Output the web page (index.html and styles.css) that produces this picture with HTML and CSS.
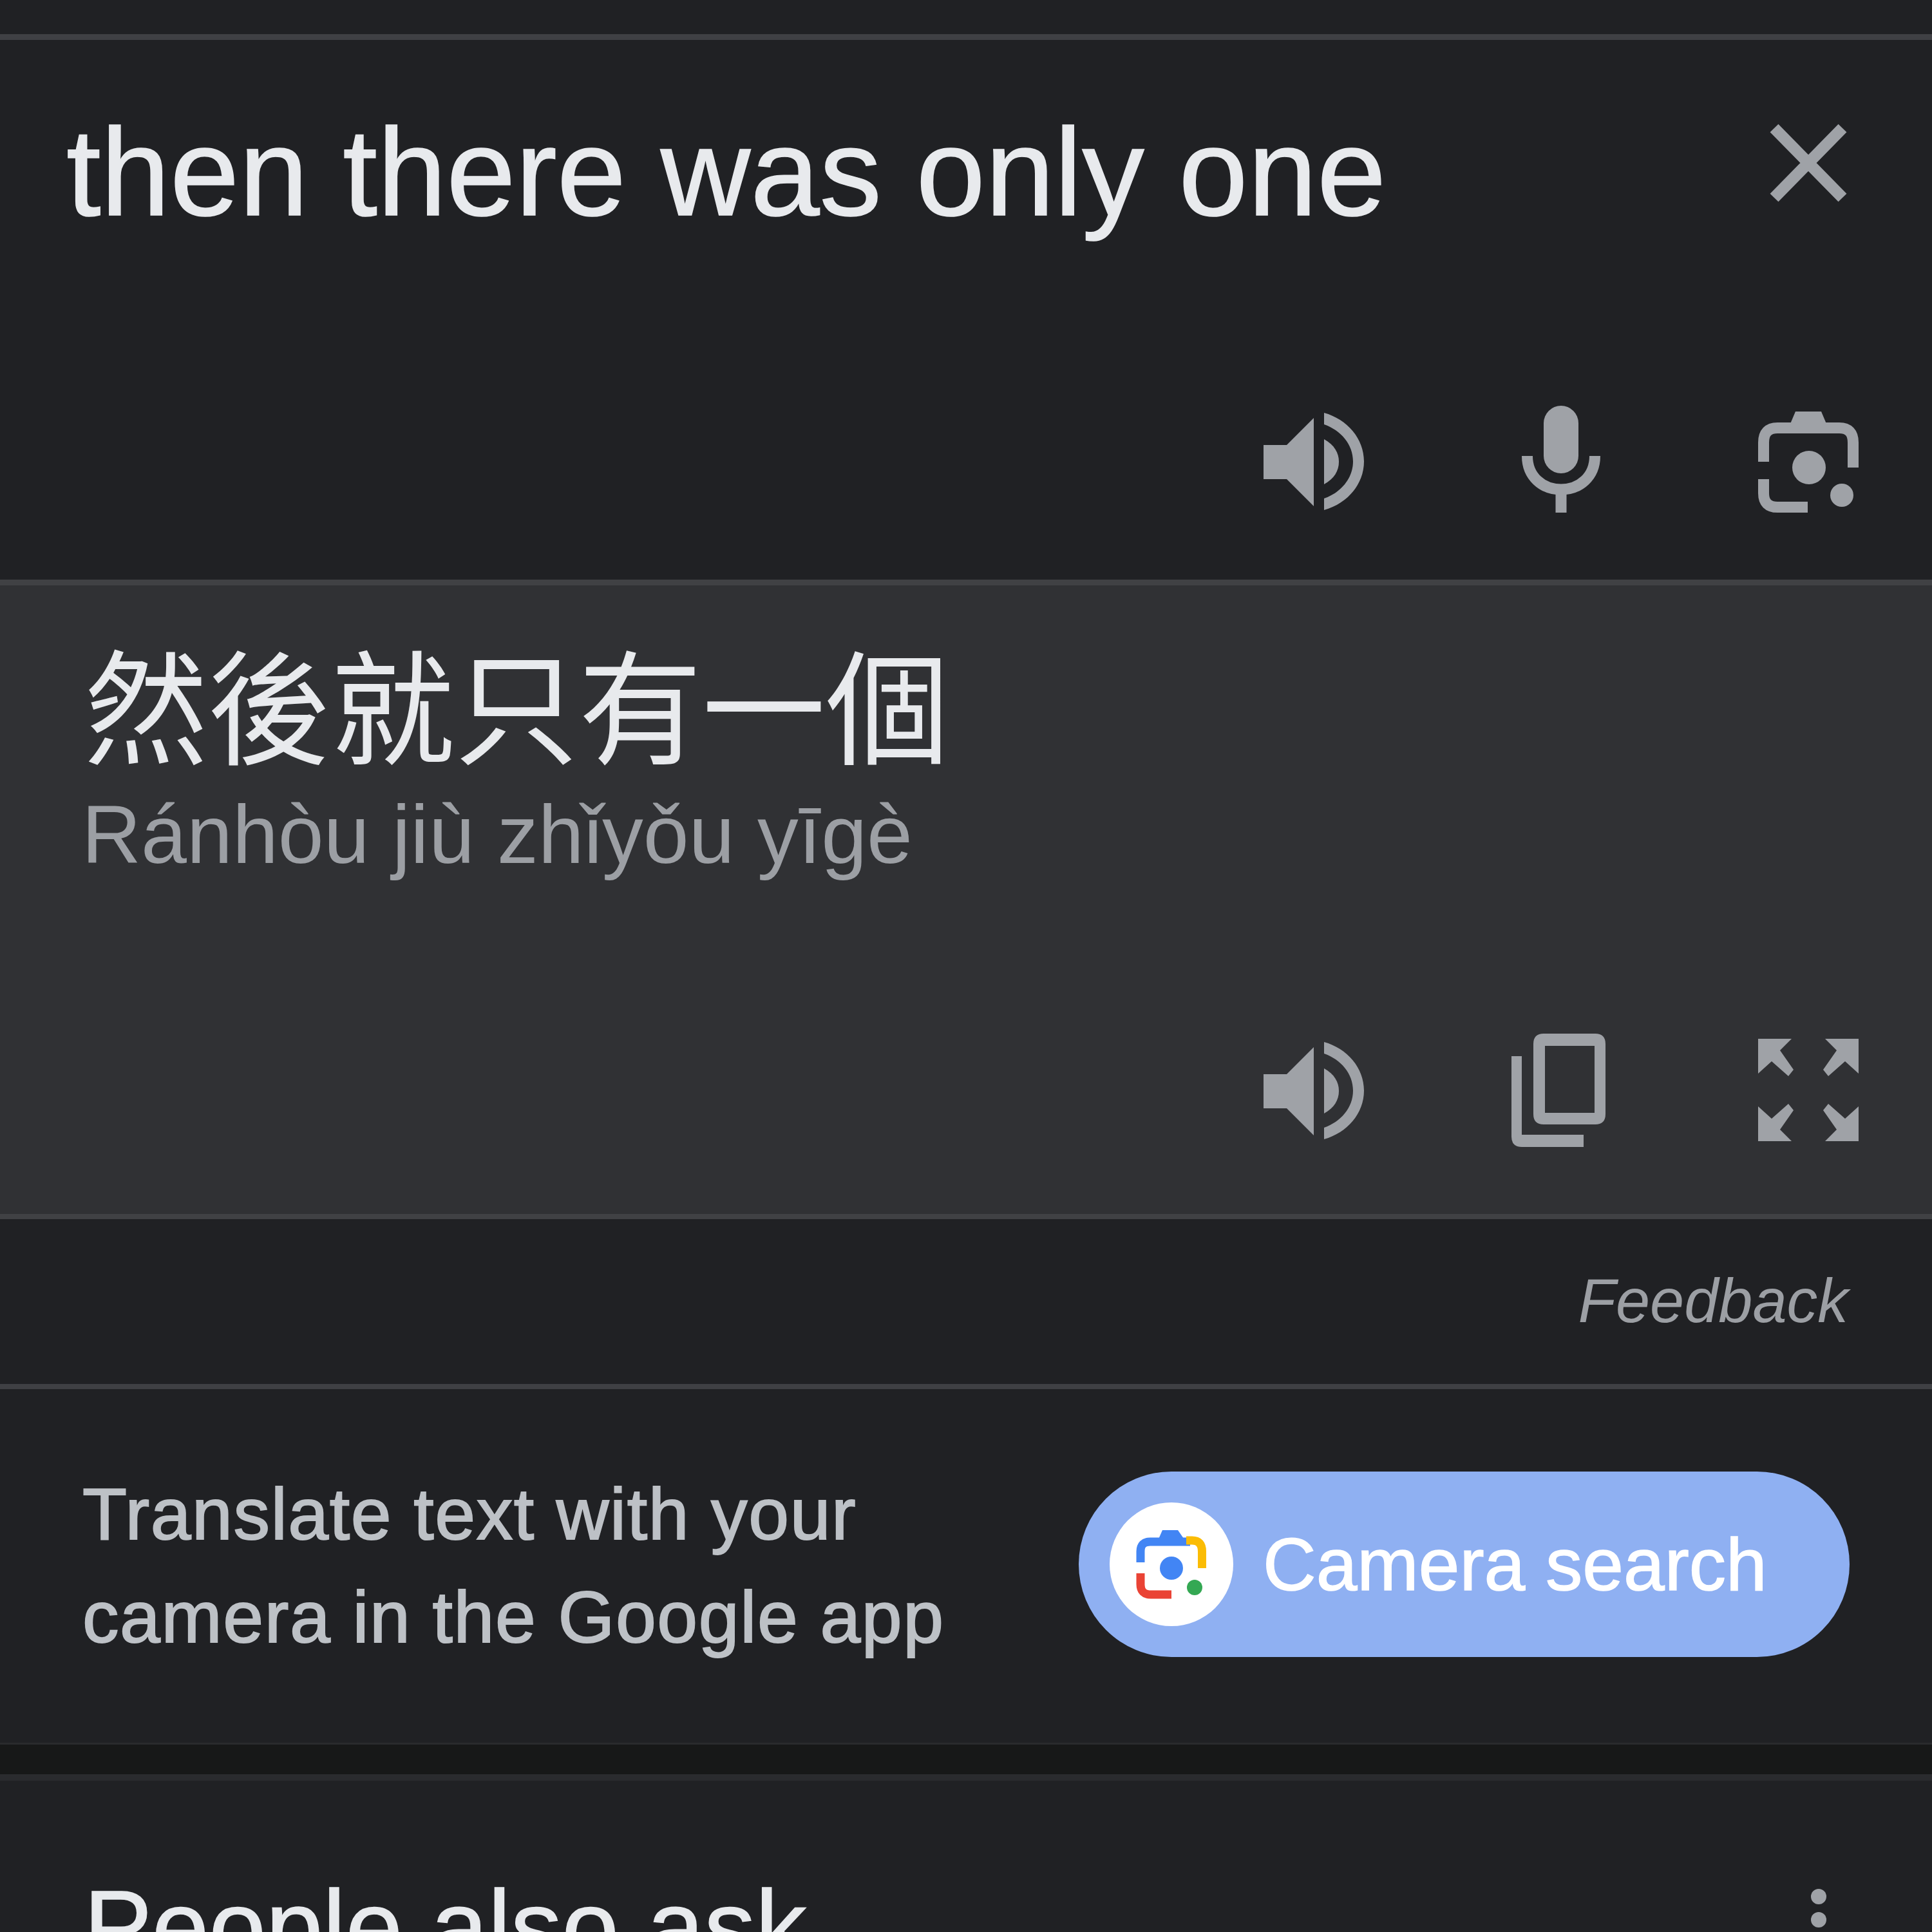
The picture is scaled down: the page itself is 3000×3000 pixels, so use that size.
FILE: index.html
```html
<!DOCTYPE html>
<html>
<head>
    <title>Google Translate card</title>
    <link rel="stylesheet" href="styles.css">
</head>
<body>
    <div class="page">
        <div class="top-strip"></div>

        <section class="source">
            <div class="source-text-row">
                <div class="source-text">then there was only one</div>
                <svg class="icon close-icon" width="120" height="122" viewBox="0 0 120 122">
                    <path class="line" d="M7 7 L113 115 M113 7 L7 115"/>
                </svg>
            </div>
            <div class="icon-row source-icons">
                <svg class="icon" width="156" height="176" viewBox="0 -11 156 176">
                    <path d="M0 50 H36 L78 8 V145 L36 103 H0 Z"/>
                    <path d="M94 41 C110 50 117 62 117 76 C117 90 110 102 94 111 Z"/>
                    <path d="M94 0 C130 10 156 40 156 75.5 C156 111 130 141 94 151 V133 C120 124 139 102 139 75.5 C139 49 120 27 94 18 Z"/>
                </svg>
                <svg class="icon" width="156" height="176" viewBox="-17 0 156 176">
                    <rect x="34" y="0" width="54" height="105" rx="27"/>
                    <path class="line" d="M8.5 78 C8.5 110 32 130 61 130 C90 130 113.5 110 113.5 78"/>
                    <rect x="52.5" y="130" width="17" height="36"/>
                </svg>
                <svg class="icon" width="156" height="176" viewBox="0 -9 156 176">
                    <path d="M47 26 L58 0 H98 L109 26 Z"/>
                    <path class="line" d="M8.5 78 V48 Q8.500 25.500 30 25.500 H126 Q147.500 25.500 147.500 48 V87"/>
                    <path class="line" d="M8.500 105 V127 Q8.500 148.500 30 148.500 H77"/>
                    <circle cx="79" cy="87" r="26"/>
                    <circle cx="130" cy="130" r="18"/>
                </svg>
            </div>
        </section>

        <section class="target">
            <div class="target-text" lang="zh-Hant">然後就只有一個</div>
            <div class="pinyin">Ránhòu jiù zhǐyǒu yīgè</div>
            <div class="icon-row target-icons">
                <svg class="icon" width="156" height="176" viewBox="0 -13 156 176">
                    <path d="M0 50 H36 L78 8 V145 L36 103 H0 Z"/>
                    <path d="M94 41 C110 50 117 62 117 76 C117 90 110 102 94 111 Z"/>
                    <path d="M94 0 C130 10 156 40 156 75.5 C156 111 130 141 94 151 V133 C120 124 139 102 139 75.5 C139 49 120 27 94 18 Z"/>
                </svg>
                <svg class="icon" width="156" height="176" viewBox="-1 0 156 176">
                    <path fill-rule="evenodd" d="M50 0 H130 Q146 0 146 16 V125 Q146 141 130 141 H50 Q34 141 34 125 V16 Q34 0 50 0 Z M52 19 V123 H129 V19 Z"/>
                    <path d="M0 35 H16 V157 H112 V176 H16 Q0 176 0 160 Z"/>
                </svg>
                <svg class="icon" width="156" height="176" viewBox="0 -8 156 176">
                    <polygon points="0,0 52,0 34,18 55,48 47,58 21,35 0,54"/>
                    <polygon points="0,0 52,0 34,18 55,48 47,58 21,35 0,54" transform="translate(156 0) scale(-1 1)"/>
                    <polygon points="0,0 52,0 34,18 55,48 47,58 21,35 0,54" transform="translate(0 159) scale(1 -1)"/>
                    <polygon points="0,0 52,0 34,18 55,48 47,58 21,35 0,54" transform="translate(156 159) scale(-1 -1)"/>
                </svg>
            </div>
        </section>

        <div class="feedback-row">
            <span class="feedback">Feedback</span>
        </div>

        <section class="promo">
            <div class="promo-text">Translate text with your<br>camera in the Google app</div>
            <div class="camera-button">
                <span class="lens-circle">
                    <svg width="192" height="192" viewBox="0 0 192 192">
                        <path class="lens-blue" d="M48 93 V76 Q48 61 63 61 H125"/>
                        <path class="lens-fill-blue" d="M72 66 L82 43 H106 L122 66 Z"/>
                        <path class="lens-yellow" d="M119 59 H128 Q143.500 59 143.500 76 V102"/>
                        <path class="lens-red" d="M48 110 V127 Q48 143 64 143 H96"/>
                        <circle class="lens-fill-blue" cx="96" cy="102" r="18"/>
                        <circle class="lens-fill-green" cx="132" cy="132" r="12"/>
                    </svg>
                </span>
                <span class="camera-label">Camera search</span>
            </div>
        </section>

        <div class="band"></div>

        <section class="people">
            <h2 class="people-title">People also ask</h2>
            <svg class="icon more-icon" width="24" height="96" viewBox="0 0 24 96">
                <circle cx="12" cy="12" r="12"/>
                <circle cx="12" cy="48" r="12"/>
                <circle cx="12" cy="84" r="12"/>
            </svg>
        </section>
    </div>
</body>
</html>
```

FILE: styles.css
```css
body {
    margin: 0;
    background-color: #202124;
    font-family: "Liberation Sans", Arial, sans-serif;
}
.page {
    width: 3000px;
    height: 3000px;
    overflow: hidden;
}
.top-strip {
    height: 53px;
    border-bottom: 9px solid #3f4044;
}
.icon {
    fill: #9fa2a7;
    display: block;
    flex: none;
}
.icon .line {
    fill: none;
    stroke: #9fa2a7;
    stroke-width: 17;
}
.close-icon .line {
    stroke-width: 18;
}
.icon-row {
    display: flex;
    justify-content: flex-end;
    gap: 228px;
    padding-right: 114px;
}
.source {
    height: 838px;
}
.source-text-row {
    display: flex;
    justify-content: space-between;
    align-items: flex-start;
    height: 568px;
    padding: 0 132px 0 103px;
}
.source-text {
    font-size: 193px;
    line-height: 220px;
    margin-top: 95px;
    -webkit-text-stroke: 1.5px #e8eaed;
    color: #e8eaed;
}
.close-icon {
    margin-top: 130px;
}
.target {
    height: 993px;
    box-sizing: border-box;
    background-color: #303134;
    border-top: 9px solid #404144;
    border-bottom: 8px solid #404144;
}
.target-text {
    padding: 64px 0 0 130px;
    height: 230px;
    font-family: "Noto Sans CJK TC", sans-serif;
    font-size: 192px;
    line-height: 230px;
    color: #e8eaed;
}
.pinyin {
    padding-left: 127px;
    margin-top: 18px;
    font-size: 127.5px;
    line-height: 150px;
    color: #9c9fa4;
}
.target-icons {
    margin-top: 234px;
}
.feedback-row {
    height: 264px;
    box-sizing: border-box;
    border-bottom: 8px solid #3f4044;
    padding: 72px 130px 0 0;
    text-align: right;
}
.feedback {
    font-size: 95.5px;
    line-height: 110px;
    font-style: italic;
    color: #9c9fa4;
}
.promo {
    height: 552px;
    box-sizing: border-box;
    display: flex;
    justify-content: space-between;
    align-items: flex-start;
    padding: 128px 128px 0 128px;
    border-bottom: 3px solid #2a2b2d;
}
.promo-text {
    font-size: 113px;
    letter-spacing: 1.6px;
    -webkit-text-stroke: 2px #bdc1c6;
    line-height: 160px;
    color: #bdc1c6;
    margin-top: -14px;
}
.camera-button {
    width: 1197px;
    height: 288px;
    box-sizing: border-box;
    display: flex;
    align-items: center;
    gap: 46px;
    padding-left: 48px;
    border-radius: 144px;
    background-color: #8fb0f2;
}
.lens-circle {
    display: block;
    width: 192px;
    height: 192px;
    border-radius: 50%;
    background-color: #fff;
}
.lens-circle svg {
    display: block;
    fill: none;
    stroke-width: 13;
}
.lens-blue {
    stroke: #4285f4;
}
.lens-yellow {
    stroke: #fbbc04;
}
.lens-red {
    stroke: #ea4335;
}
.lens-fill-blue {
    fill: #4285f4;
}
.lens-fill-green {
    fill: #34a853;
}
.camera-label {
    font-size: 114.5px;
    -webkit-text-stroke: 1.5px #fff;
    color: #fff;
}
.band {
    height: 46px;
    background-color: #171818;
    border-bottom: 10px solid #2a2b2e;
}
.people {
    display: flex;
    justify-content: space-between;
    align-items: flex-start;
    padding: 0 164px 0 130px;
}
.people-title {
    margin: 142px 0 0;
    font-size: 159px;
    line-height: 170px;
    font-weight: normal;
    -webkit-text-stroke: 1.5px #e8eaed;
    color: #e8eaed;
}
.more-icon {
    margin-top: 168px;
}
```
